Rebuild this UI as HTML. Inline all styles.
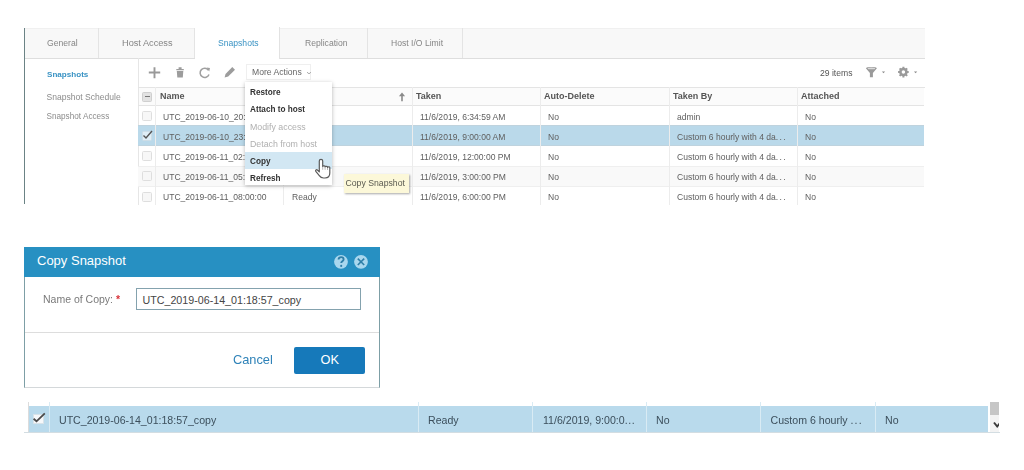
<!DOCTYPE html>
<html><head><meta charset="utf-8">
<style>
html,body{margin:0;padding:0;background:#fff;width:1024px;height:470px;overflow:hidden;position:relative;font-family:"Liberation Sans",sans-serif;}
.a{position:absolute;}
.t{position:absolute;white-space:nowrap;line-height:1;}
.tabs{left:25px;top:28px;width:900px;height:31px;background:#f8f8f8;border-top:1px solid #f0f0f0;border-bottom:1px solid #dedede;box-sizing:border-box;}
.tab{position:absolute;top:28px;height:30px;box-sizing:border-box;border-right:1px solid #e4e4e4;}
.tabtxt{font-size:8.6px;color:#858585;top:39.3px;}
.side{font-size:8.4px;color:#8c8c8c;}
.hdr{font-size:9px;font-weight:bold;color:#555;top:92.4px;}
.cell{font-size:8.55px;color:#5e5e5e;margin-top:1px;}
.vl{position:absolute;width:1px;background:#ececec;}
.hl{position:absolute;height:1px;background:#ececec;}
.cb{position:absolute;width:10px;height:10px;border:1px solid #dedede;background:#f7f7f7;border-radius:1.5px;box-sizing:border-box;}
.mi{font-size:8.2px;font-weight:bold;color:#333;left:250px;}
.mid{font-size:8.8px;color:#b0b0b0;left:250px;}
.bt{font-size:10.6px;color:#3c4f5c;top:415px;}
.bvl{position:absolute;width:1px;background:#d9ebf4;top:402px;height:30px;}
</style></head><body>
<div id="wrap" style="position:absolute;left:0;top:0;width:1024px;height:470px;filter:blur(0.3px)">

<!-- ========== TOP SCREENSHOT ========== -->
<div class="a" style="left:24px;top:28px;width:1px;height:176px;background:#6b8385"></div>
<div class="a tabs"></div>
<div class="tab" style="left:25px;width:74px"></div>
<div class="tab" style="left:99px;width:96px"></div>
<div class="a" style="left:195px;top:27px;width:85px;height:32px;background:#fff;border-right:1px solid #e2e2e2;box-sizing:border-box"></div>
<div class="tab" style="left:280px;width:88px"></div>
<div class="tab" style="left:368px;width:95px"></div>
<div class="t tabtxt" style="left:47px">General</div>
<div class="t tabtxt" style="left:122px;font-size:9.2px;top:39px">Host Access</div>
<div class="t tabtxt" style="left:218px;color:#3a93c4">Snapshots</div>
<div class="t tabtxt" style="left:305px">Replication</div>
<div class="t tabtxt" style="left:391px">Host I/O Limit</div>

<!-- sidebar -->
<div class="t side" style="left:47px;top:71px;font-size:8.1px;font-weight:bold;color:#3a93c4">Snapshots</div>
<div class="t side" style="left:46.5px;top:92.7px;font-size:8.55px">Snapshot Schedule</div>
<div class="t side" style="left:46.5px;top:112.7px;font-size:8.2px">Snapshot Access</div>
<div class="vl" style="left:138px;top:58px;height:147px;background:#e6e6e6"></div>

<!-- toolbar -->
<svg class="a" style="left:146px;top:64px" width="100" height="18" viewBox="0 0 100 18">
  <path d="M2.8 8.5h11.4M8.5 3.2v11" stroke="#999" stroke-width="1.9" fill="none"/>
  <path d="M30.3 5h7.5v1.3h-7.5z M32.6 3.3h3v1.8h-3z M30.8 6.9h6.5l-0.5 6.7h-5.5z" fill="#9c9c9c"/>
  <path d="M62.5 6.2A4.6 4.6 0 1 0 63 10.5" stroke="#a0a0a0" stroke-width="1.5" fill="none"/>
  <path d="M60.5 3.5l3.5 0.5l-0.8 3.5z" fill="#a0a0a0"/>
  <path d="M78.6 13.4l0.9-3.5l6.8-6.8l2.7 2.7l-6.8 6.8z" fill="#9c9c9c"/>
</svg>
<div class="a" style="left:246px;top:64px;width:65px;height:16px;border:1px solid #efefef;box-sizing:border-box;background:#fff"></div>
<div class="t" style="left:252px;top:68px;font-size:8.6px;color:#666">More Actions</div>
<svg class="a" style="left:306px;top:71px" width="6" height="4"><path d="M1 1.2l2 1.6l2-1.6" stroke="#aaa" stroke-width="1" fill="none"/></svg>

<div class="t" style="left:820px;top:68.6px;font-size:8.6px;color:#555">29 items</div>
<svg class="a" style="left:862px;top:64px" width="62" height="16" viewBox="0 0 62 16">
  <path d="M3.9 4.3C3.9 2.5 14.9 2.5 14.9 4.3L10.9 9V13.2H7.9V9Z" fill="#9a9a9a"/>
  <ellipse cx="9.4" cy="4.4" rx="3.7" ry="0.9" fill="#d8d8d8"/>
  <path d="M19.9 7.4h3.2l-1.6 1.8z" fill="#8a8a8a"/>
  <circle cx="41.4" cy="8.1" r="3" fill="none" stroke="#9a9a9a" stroke-width="2.5"/>
  <path d="M44.80 8.10L46.70 8.10M43.80 10.50L45.15 11.85M41.40 11.50L41.40 13.40M39.00 10.50L37.65 11.85M38.00 8.10L36.10 8.10M39.00 5.70L37.65 4.35M41.40 4.70L41.40 2.80M43.80 5.70L45.15 4.35" stroke="#9a9a9a" stroke-width="2"/>
  <path d="M52 7.4h3.2l-1.6 1.8z" fill="#8a8a8a"/>
</svg>

<!-- table -->
<div class="a" style="left:139px;top:87px;width:785px;height:18px;background:#fbfbfb"></div>
<div class="hl" style="left:138px;top:87px;width:787px;background:#e4e4e4"></div>
<div class="hl" style="left:138px;top:105px;width:786px;background:#e4e4e4"></div>
<div class="a" style="left:138px;top:125px;width:786px;height:21px;background:#bad9ea;border-top:1px solid #bfd3de;border-bottom:1px solid #bfd3de;box-sizing:border-box"></div>
<div class="a" style="left:138px;top:166px;width:786px;height:20px;background:#f9f9f9"></div>
<div class="hl" style="left:138px;top:166px;width:786px;background:#efefef"></div>
<div class="hl" style="left:138px;top:186px;width:786px;background:#efefef"></div>
<div class="vl" style="left:155px;top:87px;height:118px"></div>
<div class="vl" style="left:283px;top:87px;height:118px"></div>
<div class="vl" style="left:412px;top:87px;height:118px"></div>
<div class="vl" style="left:540px;top:87px;height:118px"></div>
<div class="vl" style="left:669px;top:87px;height:118px"></div>
<div class="vl" style="left:797px;top:87px;height:118px"></div>

<div class="cb" style="left:142px;top:91.5px;background:#e2e2e2;border-color:#cfcfcf"></div>
<div class="a" style="left:144.5px;top:96px;width:5px;height:1.3px;background:#777"></div>
<div class="t hdr" style="left:160px">Name</div>
<svg class="a" style="left:398px;top:91px" width="8" height="12" viewBox="0 0 8 12"><path d="M4 4v6.2" stroke="#8a8a8a" stroke-width="1.6"/><path d="M0.9 5.2l3.1-3.8l3.1 3.8z" fill="#8a8a8a"/></svg>
<div class="t hdr" style="left:416px">Taken</div>
<div class="t hdr" style="left:544px">Auto-Delete</div>
<div class="t hdr" style="left:673px">Taken By</div>
<div class="t hdr" style="left:801px">Attached</div>

<div class="cb" style="left:142px;top:111px"></div>
<div class="cb" style="left:142px;top:131px;background:#dfeef6;border-color:#cddde6"></div>
<svg class="a" style="left:142px;top:129px" width="12" height="12"><path d="M1.5 6.5l2.5 2.5l6-7" stroke="#555" stroke-width="1.4" fill="none"/></svg>
<div class="cb" style="left:142px;top:151px"></div>
<div class="cb" style="left:142px;top:171px"></div>
<div class="cb" style="left:142px;top:192px"></div>

<div class="t cell" style="left:163px;top:112px">UTC_2019-06-10_20:00:00</div>
<div class="t cell" style="left:163px;top:132px">UTC_2019-06-10_23:00:00</div>
<div class="t cell" style="left:163px;top:152px">UTC_2019-06-11_02:00:00</div>
<div class="t cell" style="left:163px;top:172px">UTC_2019-06-11_05:00:00</div>
<div class="t cell" style="left:163px;top:192px">UTC_2019-06-11_08:00:00</div>
<div class="t cell" style="left:292px;top:192px">Ready</div>

<div class="t cell" style="left:420px;top:112px">11/6/2019, 6:34:59 AM</div>
<div class="t cell" style="left:420px;top:132px">11/6/2019, 9:00:00 AM</div>
<div class="t cell" style="left:420px;top:152px">11/6/2019, 12:00:00 PM</div>
<div class="t cell" style="left:420px;top:172px">11/6/2019, 3:00:00 PM</div>
<div class="t cell" style="left:420px;top:192px">11/6/2019, 6:00:00 PM</div>
<div class="t cell" style="left:548px;top:112px">No</div>
<div class="t cell" style="left:548px;top:132px">No</div>
<div class="t cell" style="left:548px;top:152px">No</div>
<div class="t cell" style="left:548px;top:172px">No</div>
<div class="t cell" style="left:548px;top:192px">No</div>
<div class="t cell" style="left:677px;top:112px">admin</div>
<div class="t cell" style="left:677px;top:132px">Custom 6 hourly with 4 da<span style="letter-spacing:1.3px">...</span></div>
<div class="t cell" style="left:677px;top:152px">Custom 6 hourly with 4 da<span style="letter-spacing:1.3px">...</span></div>
<div class="t cell" style="left:677px;top:172px">Custom 6 hourly with 4 da<span style="letter-spacing:1.3px">...</span></div>
<div class="t cell" style="left:677px;top:192px">Custom 6 hourly with 4 da<span style="letter-spacing:1.3px">...</span></div>
<div class="t cell" style="left:805px;top:112px">No</div>
<div class="t cell" style="left:805px;top:132px">No</div>
<div class="t cell" style="left:805px;top:152px">No</div>
<div class="t cell" style="left:805px;top:172px">No</div>
<div class="t cell" style="left:805px;top:192px">No</div>

<!-- dropdown menu -->
<div class="a" style="left:245px;top:82px;width:87px;height:103px;background:#fff;box-shadow:0 1px 4px rgba(0,0,0,0.28)"></div>
<div class="a" style="left:245px;top:152px;width:87px;height:17px;background:#d2e7f3"></div>
<div class="t mi" style="top:88.8px">Restore</div>
<div class="t mi" style="top:105.9px">Attach to host</div>
<div class="t mid" style="top:123px">Modify access</div>
<div class="t mid" style="top:140px">Detach from host</div>
<div class="t mi" style="top:158px">Copy</div>
<div class="t mi" style="top:174.6px">Refresh</div>

<!-- hand cursor -->
<svg class="a" style="left:314px;top:157px" width="18" height="22" viewBox="0 0 18 22">
  <path d="M5.3 4a1.7 1.7 0 0 1 3.4 0V9.5c0-1 2.4-1 2.4 0v0.5c0-1 2.4-1 2.4 0v0.6c0-1 2.3-1 2.3 0V16c0 3-2 5-4.8 5h-1.5c-2 0-3.2-0.9-4.2-2.4L1.8 14.4c-0.7-1 0.6-2.2 1.6-1.4L5.3 14.8z" fill="#fff" stroke="#5a5a5a" stroke-width="1.2" stroke-linejoin="round"/>
  <path d="M8.7 9.8v3M11.1 10.3v2.5M13.5 10.8v2.2" stroke="#999" stroke-width="0.7"/>
</svg>
<!-- tooltip -->
<div class="a" style="left:343.5px;top:173.5px;width:65.5px;height:19px;background:#fcf8d9;box-shadow:1px 1px 2px rgba(0,0,0,0.35)"></div>
<div class="t" style="left:345.5px;top:179px;font-size:8.7px;color:#5a5a50">Copy Snapshot</div>

<!-- ========== DIALOG ========== -->
<div class="a" style="left:24px;top:247px;width:356px;height:141px;background:#fff;border:1px solid #7d9fa6;border-bottom-color:#d4d8da;border-top:none;box-sizing:border-box"></div>
<div class="a" style="left:24px;top:247px;width:356px;height:30px;background:#2790c2"></div>
<div class="t" style="left:37px;top:253.8px;font-size:13px;color:#fff">Copy Snapshot</div>
<svg class="a" style="left:330px;top:251px" width="44" height="22" viewBox="0 0 44 22">
  <circle cx="11" cy="10.8" r="6.9" fill="#a9d7ee"/>
  <path d="M8.6 8.6c0-1.6 1.1-2.5 2.5-2.5s2.5 0.9 2.5 2.3c0 1.8-2.4 1.9-2.4 3.6" stroke="#2f7fa8" stroke-width="1.9" fill="none"/>
  <circle cx="11.2" cy="14.9" r="1.05" fill="#2f7fa8"/>
  <circle cx="31" cy="10.8" r="6.9" fill="#a9d7ee"/>
  <path d="M27.8 7.6l6.4 6.4M34.2 7.6l-6.4 6.4" stroke="#2f7fa8" stroke-width="1.6"/>
</svg>
<div class="t" style="left:43px;top:294px;font-size:10.5px;color:#7a7a7a">Name of Copy: <span style="color:#d9333a;font-weight:bold">*</span></div>
<div class="a" style="left:136px;top:288px;width:225px;height:22px;border:1px solid #84a2ae;box-sizing:border-box;background:#fff"></div>
<div class="t" style="left:142.5px;top:294.7px;font-size:10.7px;color:#444">UTC_2019-06-14_01:18:57_copy</div>
<div class="hl" style="left:25px;top:332px;width:354px;background:#dddddd"></div>
<div class="t" style="left:233px;top:354px;font-size:12.8px;color:#2e82b8">Cancel</div>
<div class="a" style="left:294px;top:347px;width:71px;height:27px;background:#1679ba;border-radius:2px"></div>
<div class="t" style="left:320.5px;top:354px;font-size:12.8px;color:#fff">OK</div>

<!-- ========== BOTTOM ROW ========== -->
<div class="a" style="left:29px;top:406px;width:959px;height:26px;background:#b9daec"></div>
<div class="a" style="left:28px;top:402px;width:1px;height:30px;background:#dcdcdc"></div>
<div class="hl" style="left:24px;top:432px;width:976px;background:#d3dde2"></div>
<div class="bvl" style="left:49px"></div>
<div class="bvl" style="left:418px"></div>
<div class="bvl" style="left:532px"></div>
<div class="bvl" style="left:646px"></div>
<div class="bvl" style="left:760px"></div>
<div class="bvl" style="left:875px"></div>
<div class="a" style="left:33px;top:414px;width:11px;height:10px;background:#f6f8fa;border:1px solid #d8e3e9;box-sizing:border-box"></div>
<svg class="a" style="left:32px;top:410px" width="16" height="16"><path d="M1.6 8.8l2.9 2.5l8.3-8" stroke="#4a4a4a" stroke-width="1.8" fill="none"/></svg>
<div class="t bt" style="left:59px">UTC_2019-06-14_01:18:57_copy</div>
<div class="t bt" style="left:428px">Ready</div>
<div class="t bt" style="left:543px">11/6/2019, 9:00:0<span style="letter-spacing:0.6px">...</span></div>
<div class="t bt" style="left:656px">No</div>
<div class="t bt" style="left:770.5px">Custom 6 hourly <span style="letter-spacing:1.1px">...</span></div>
<div class="t bt" style="left:885px">No</div>
<!-- scrollbar -->
<div class="a" style="left:990px;top:402px;width:9px;height:30px;background:#f3f3f3;overflow:hidden">
<div class="a" style="left:0;top:0;width:9px;height:13px;background:#c6c6c6"></div>
<svg class="a" style="left:0;top:16px" width="9" height="12"><path d="M4 4.5l3.2 4l3.2-4" stroke="#3a3a3a" stroke-width="2" fill="none"/></svg>
</div>
</div>
</body></html>
